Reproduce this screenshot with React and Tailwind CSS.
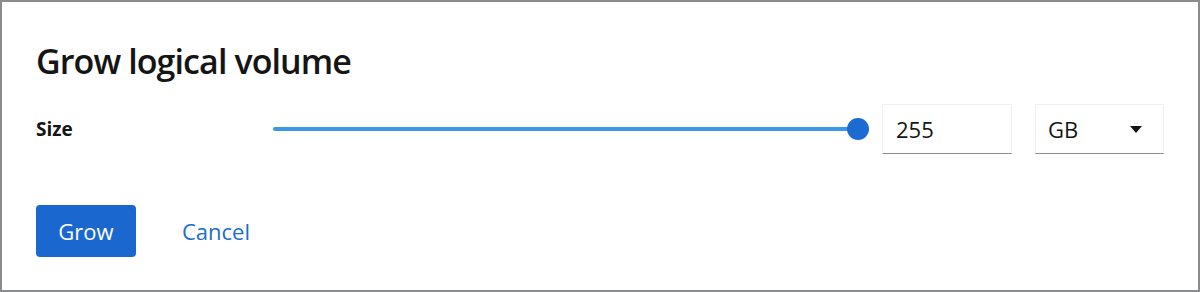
export default function App() {
  return (
    <div className="w-[1200px] h-[292px] bg-white border-2 border-[#8b8c8e] box-border" style={{ fontFamily: "'Open Sans', 'Noto Sans', sans-serif" }}>
      <div className="pl-[34px] pr-[34px] pt-[38px]">
        <h1 className="text-[34px] leading-[42px] font-semibold text-[#151515] tracking-[-0.9px]">Grow logical volume</h1>
        <div className="mt-[22px] flex items-center h-[50px]">
          <div className="w-[237px] text-[19px] font-bold text-[#151515]">Size</div>
          <div className="relative w-[598px] h-[24px] flex items-center">
            <div className="w-[586px] h-[4px] rounded-full bg-[#3a98e6]"></div>
            <div className="absolute left-[574px] top-[1px] w-[22px] h-[22px] rounded-full bg-[#1c6bd2]"></div>
          </div>
          <div className="ml-[11px] w-[130px] h-[50px] border border-[#f0f0f0] border-b-[#8a8d90] flex items-center pl-[13px] text-[22px] text-[#151515]">255</div>
          <div className="ml-[23px] w-[129px] h-[50px] border border-[#f0f0f0] border-b-[#8a8d90] flex items-center justify-between pl-[12px] pr-[21px] text-[22px] text-[#151515]">
            <span>GB</span>
            <svg width="12" height="7" viewBox="0 0 12 7"><path d="M0 0 L12 0 L6 7 Z" fill="#151515" /></svg>
          </div>
        </div>
        <div className="mt-[51px] flex items-center">
          <button className="w-[100px] h-[52px] rounded-[4px] bg-[#1a68cf] text-white text-[22px]">Grow</button>
          <button className="ml-[46px] text-[22px] text-[#1a6dcc]">Cancel</button>
        </div>
      </div>
    </div>
  );
}
